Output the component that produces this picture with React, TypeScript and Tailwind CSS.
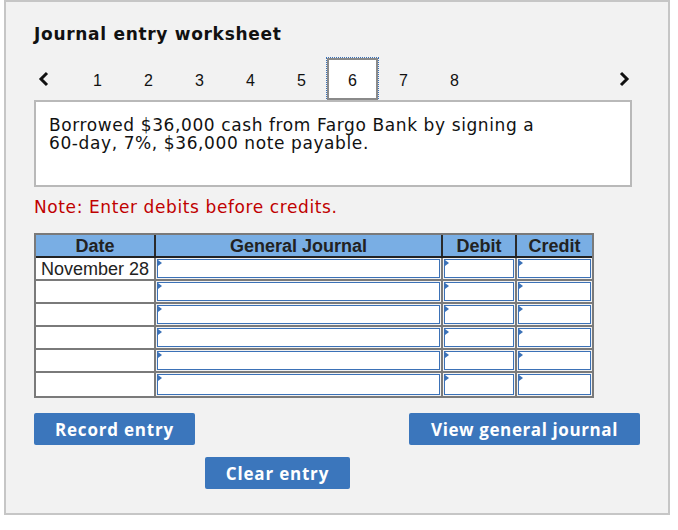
import React from 'react';

const pages = [1, 2, 3, 4, 5, 6, 7, 8];

function Chevron({ dir }: { dir: 'left' | 'right' }) {
    return (
        <svg width="12" height="16" viewBox="0 0 12 16" className="block">
            <path
                d={dir === 'left' ? 'M9 2 L3 8 L9 14' : 'M3 2 L9 8 L3 14'}
                fill="none"
                stroke="#111"
                strokeWidth="3"
            />
        </svg>
    );
}

function InputCell() {
    return (
        <div className="h-full p-[1px]">
            <div className="relative h-full border border-[#3b71b7] bg-white">
                <span className="absolute left-0 top-0 h-0 w-0 border-y-[3px] border-l-[4px] border-y-transparent border-l-[#3b71b7]" />
            </div>
        </div>
    );
}

function JournalRow({ date, last }: { date?: string; last?: boolean }) {
    return (
        <div
            className={
                'grid h-[23px] grid-cols-[120px_287px_74px_75px] ' +
                (last ? '' : 'border-b-2 border-[#7a7a7a]')
            }
        >
            <div className="flex items-center justify-center border-r-2 border-[#7a7a7a] bg-white text-[18px] leading-none text-[#222]">
                {date}
            </div>
            <div className="border-r-2 border-[#7a7a7a]">
                <InputCell />
            </div>
            <div className="border-r-2 border-[#7a7a7a]">
                <InputCell />
            </div>
            <div>
                <InputCell />
            </div>
        </div>
    );
}

export default function App() {
    return (
        <div className="h-[530px] w-[678px] bg-white font-['Liberation_Sans',sans-serif]">
            <div className="ml-[4px] flex h-[515px] w-[666px] flex-col border-2 border-[#c6c6c6] bg-[#f2f2f2] pl-[28px] pr-[36px]">
                <h1 className="mt-[22px] h-[20px] font-['DejaVu_Sans',sans-serif] text-[17px] font-bold leading-[20px] tracking-[0.7px] text-[#111]">
                    Journal entry worksheet
                </h1>

                <div className="mt-[14px] flex h-[42px] items-center">
                    <button className="ml-[4px] flex h-full items-center">
                        <Chevron dir="left" />
                    </button>
                    <div className="ml-[22px] flex h-full">
                        {pages.map((p) =>
                            p === 6 ? (
                                <div
                                    key={p}
                                    className="flex h-full w-[51px] items-center justify-center border-2 border-[#8a8a8a] bg-white pt-[3px] text-[16px] text-[#111] outline-1 outline-dotted outline-[#3b71b7]"
                                >
                                    {p}
                                </div>
                            ) : (
                                <div
                                    key={p}
                                    className="flex h-full w-[51px] items-center justify-center pt-[3px] text-[16px] text-[#111]"
                                >
                                    {p}
                                </div>
                            )
                        )}
                    </div>
                    <button className="ml-auto mr-[2px] flex h-full items-center">
                        <Chevron dir="right" />
                    </button>
                </div>

                <div className="h-[87px] w-[598px] border-2 border-[#b9b9b9] bg-white px-[13px] pt-[14px] font-['DejaVu_Sans',sans-serif] text-[17px] leading-[18px] tracking-[0.6px] text-[#111]">
                    Borrowed $36,000 cash from Fargo Bank by signing a
                    <br />
                    60-day, 7%, $36,000 note payable.
                </div>

                <p className="mt-[10px] font-['DejaVu_Sans',sans-serif] text-[17px] leading-[20px] tracking-[0.6px] text-[#c00000]">
                    Note: Enter debits before credits.
                </p>

                <div className="mt-[16px] w-[560px] border-2 border-[#7a7a7a]">
                    <div className="grid h-[23px] grid-cols-[120px_287px_74px_75px] border-b-2 border-[#222] bg-[#79aee4] text-[18px] font-bold leading-none text-[#222]">
                        <div className="flex items-center justify-center border-r-2 border-[#2a2a2a]">Date</div>
                        <div className="flex items-center justify-center border-r-2 border-[#2a2a2a]">General Journal</div>
                        <div className="flex items-center justify-center border-r-2 border-[#2a2a2a]">Debit</div>
                        <div className="flex items-center justify-center">Credit</div>
                    </div>
                    <JournalRow date="November 28" />
                    <JournalRow />
                    <JournalRow />
                    <JournalRow />
                    <JournalRow />
                    <JournalRow last />
                </div>

                <div className="mt-[15px] flex justify-between">
                    <button className="h-[32px] w-[161px] rounded-[2px] bg-[#3b76bc] pt-[1px] font-['Open_Sans',sans-serif] text-[17px] font-bold tracking-[0.8px] text-white">
                        Record entry
                    </button>
                    <button className="-mr-[8px] h-[32px] w-[231px] rounded-[2px] bg-[#3b76bc] pt-[1px] font-['Open_Sans',sans-serif] text-[17px] font-bold tracking-[0.6px] text-white">
                        View general journal
                    </button>
                </div>
                <div className="mt-[12px] pl-[171px]">
                    <button className="h-[32px] w-[145px] rounded-[2px] bg-[#3b76bc] pt-[1px] font-['Open_Sans',sans-serif] text-[17px] font-bold tracking-[0.8px] text-white">
                        Clear entry
                    </button>
                </div>
            </div>
        </div>
    );
}
